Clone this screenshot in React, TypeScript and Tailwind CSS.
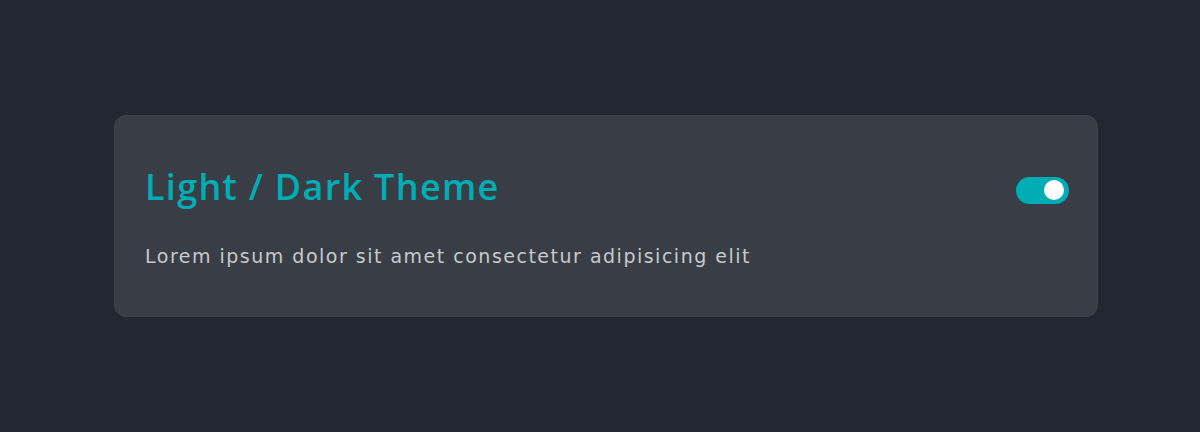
export default function App() {
  return (
    <div className="flex h-[432px] w-full items-center bg-[#222831] pl-[114px] font-['Open_Sans',sans-serif]">
      <div className="flex h-[202px] w-[984px] flex-col rounded-xl border border-[#3e434b] bg-[#393e46] pl-[30px] pr-[28px] pt-[48px]">
        <div className="flex items-center justify-between">
          <h2 className="text-[36px] font-semibold leading-[46px] tracking-[1.3px] text-[#00adb5]">
            Light / Dark Theme
          </h2>
          <button
            type="button"
            aria-pressed="true"
            className="mt-[6px] flex h-[27px] w-[53px] items-center justify-end rounded-full bg-[#00adb5] pr-[5px]"
          >
            <span className="h-[20px] w-[20px] rounded-full bg-white" />
          </button>
        </div>
        <p className="mt-[32px] font-['DejaVu_Sans',sans-serif] text-[19px] tracking-[1.5px] text-[#c8c9cb]">
          Lorem ipsum dolor sit amet consectetur adipisicing elit
        </p>
      </div>
    </div>
  );
}
